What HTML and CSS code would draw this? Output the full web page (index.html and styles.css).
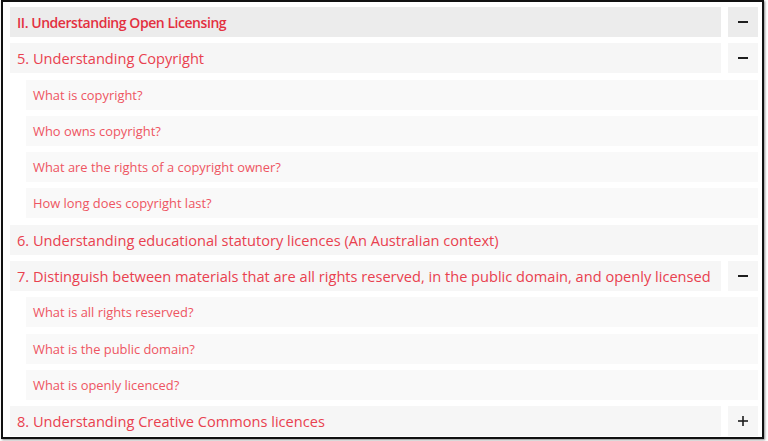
FILE: index.html
```html
<!DOCTYPE html>
<html>
<head>
<meta charset="utf-8">
<link rel="stylesheet" href="styles.css">
</head>
<body>
<div class="frame">
  <div class="row">
    <div class="bar bar-head"><span class="title-head">II. Understanding Open Licensing</span></div>
    <div class="btn btn-head"><svg width="12" height="12" viewBox="0 0 12 12"><line x1="1" y1="6" x2="11" y2="6" stroke="#1e1e1e" stroke-width="2"/></svg></div>
  </div>
  <div class="row">
    <div class="bar"><span class="title">5. Understanding Copyright</span></div>
    <div class="btn"><svg width="12" height="12" viewBox="0 0 12 12"><line x1="1" y1="6" x2="11" y2="6" stroke="#1e1e1e" stroke-width="2"/></svg></div>
  </div>
  <div class="sub"><span class="subtitle">What is copyright?</span></div>
  <div class="sub"><span class="subtitle">Who owns copyright?</span></div>
  <div class="sub"><span class="subtitle">What are the rights of a copyright owner?</span></div>
  <div class="sub"><span class="subtitle">How long does copyright last?</span></div>
  <div class="row">
    <div class="bar"><span class="title">6. Understanding educational statutory licences (An Australian context)</span></div>
  </div>
  <div class="row">
    <div class="bar"><span class="title">7. Distinguish between materials that are all rights reserved, in the public domain, and openly licensed</span></div>
    <div class="btn"><svg width="12" height="12" viewBox="0 0 12 12"><line x1="1" y1="6" x2="11" y2="6" stroke="#1e1e1e" stroke-width="2"/></svg></div>
  </div>
  <div class="sub"><span class="subtitle">What is all rights reserved?</span></div>
  <div class="sub"><span class="subtitle">What is the public domain?</span></div>
  <div class="sub"><span class="subtitle">What is openly licenced?</span></div>
  <div class="row">
    <div class="bar"><span class="title">8. Understanding Creative Commons licences</span></div>
    <div class="btn"><svg width="12" height="12" viewBox="0 0 12 12"><line x1="1" y1="6" x2="11" y2="6" stroke="#1e1e1e" stroke-width="1.6"/><line x1="6" y1="1" x2="6" y2="11" stroke="#1e1e1e" stroke-width="1.6"/></svg></div>
  </div>
</div>
</body>
</html>
```
FILE: styles.css
```css
html, body {
  margin: 0;
  padding: 0;
  background: #ffffff;
}
body {
  width: 768px;
  height: 441px;
  overflow: hidden;
  font-family: "Open Sans", "Liberation Sans", sans-serif;
}
.frame {
  box-sizing: border-box;
  margin-left: 1px;
  width: 763px;
  height: 439px;
  border: 2px solid #111111;
  box-shadow: 1px 1px 2px #8a8a8a;
  padding: 5px 4px 0 7px;
  display: flex;
  flex-direction: column;
  gap: 6.3px;
  overflow: hidden;
}
.row {
  display: flex;
  gap: 7px;
  height: 30px;
  flex: none;
}
.bar {
  flex: 1;
  background: #f6f6f6;
  display: flex;
  align-items: center;
  padding-left: 7px;
}
.bar-head {
  background: #ececec;
}
.btn {
  width: 30px;
  background: #f6f6f6;
  display: flex;
  align-items: center;
  justify-content: center;
  flex: none;
}
.btn-head {
  background: #ececec;
}
.title-head {
  color: #e3303f;
  font-weight: 600;
  font-size: 14px;
  letter-spacing: -0.45px;
}
.title {
  color: #e9414f;
  font-size: 14.6px;
}
.sub {
  height: 30px;
  flex: none;
  margin-left: 16px;
  background: #f9f9f9;
  display: flex;
  align-items: center;
  padding-left: 7px;
}
.subtitle {
  color: #ee5562;
  font-size: 12.9px;
}
```
